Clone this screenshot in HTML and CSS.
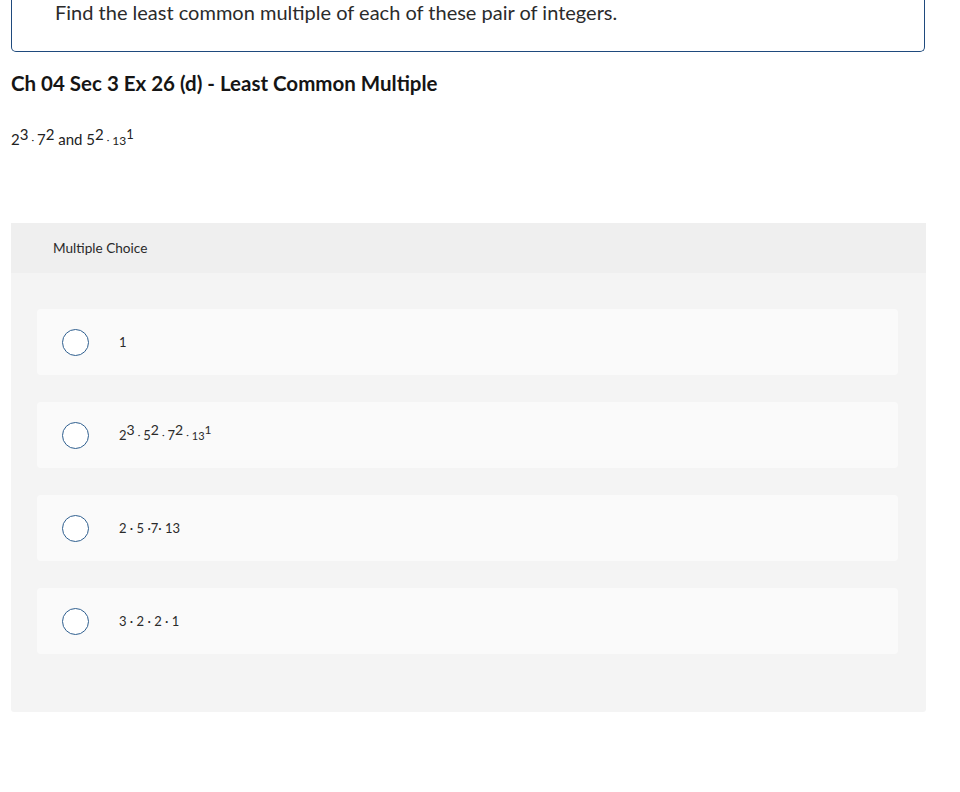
FILE: index.html
```html
<!DOCTYPE html>
<html>
<head>
<meta charset="utf-8">
<link rel="stylesheet" href="styles.css">
</head>
<body>
<div class="prompt">
  <p class="prompt-text">Find the least common multiple of each of these pair of integers.</p>
</div>
<h2 class="title">Ch 04 Sec 3 Ex 26 (d) - Least Common Multiple</h2>
<p class="question"><span class="n">2</span><sup>3</sup><span class="dot">·</span><span class="n">7</span><sup>2</sup> and <span class="n">5</span><sup>2</sup><span class="dot">·</span><span class="sm">13</span><sup class="sm">1</sup></p>

<section class="panel">
  <div class="panel-head">Multiple Choice</div>
  <div class="panel-body">
    <label class="option"><span class="radio"></span><span class="otext">1</span></label>
    <label class="option"><span class="radio"></span><span class="otext"><span class="n">2</span><sup>3</sup><span class="dot">·</span><span class="n">5</span><sup>2</sup><span class="dot">·</span><span class="n">7</span><sup>2</sup><span class="dot">·</span><span class="sm">13</span><sup class="sm">1</sup></span></label>
    <label class="option"><span class="radio"></span><span class="otext">2 · 5 ·7· 13</span></label>
    <label class="option"><span class="radio"></span><span class="otext">3 · 2 · 2 · 1</span></label>
  </div>
</section>
</body>
</html>
```
FILE: styles.css
```css
html, body {
  margin: 0;
  padding: 0;
  background: #ffffff;
  font-family: Lato, "Open Sans", sans-serif;
  color: #222;
}

.prompt {
  margin-left: 11px;
  width: 912px;
  height: 51px;
  border: 1px solid #1f4a7d;
  border-top: none;
  border-radius: 0 0 5px 5px;
}

.prompt-text {
  margin: 0;
  padding-left: 43px;
  font-size: 20px;
  line-height: 24px;
  color: #2b2b2b;
}

.title {
  margin: 19px 0 0 11px;
  font-size: 20.5px;
  line-height: 24px;
  font-weight: 700;
  color: #151515;
}

.question {
  margin: 34px 0 0 11px;
  font-size: 15px;
  line-height: 20px;
  color: #222;
}

sup {
  font-size: 15px;
  vertical-align: 5px;
  line-height: 0;
}

.sm { font-size: 12px; }
sup.sm { font-size: 13px; vertical-align: 6px; }

.dot { font-size: 10px; margin: 0 3px; position: relative; top: -2px; }

.panel {
  margin: 72px 0 0 11px;
  width: 915px;
  background: #f4f4f4;
  border-radius: 3px;
}

.panel-head {
  height: 50px;
  display: flex;
  align-items: center;
  padding-left: 42px;
  background: #efefef;
  font-size: 13.6px;
  color: #2a2a2a;
}

.panel-body {
  display: flex;
  flex-direction: column;
  gap: 27px;
  padding: 36px 28px 58px 26px;
}

.option {
  height: 66px;
  display: flex;
  align-items: center;
  background: #fafafa;
  border-radius: 4px;
  padding-left: 25px;
}

.radio {
  width: 25px;
  height: 25px;
  border: 1.5px solid #2f5f8f;
  border-radius: 50%;
  background: #fff;
  flex: none;
}

.otext {
  margin-left: 30px;
  font-size: 13px;
  color: #2a2a2a;
}

.otext sup { font-size: 14px; }
.otext sup.sm { font-size: 12px; }
.otext .sm { font-size: 11px; }
```
